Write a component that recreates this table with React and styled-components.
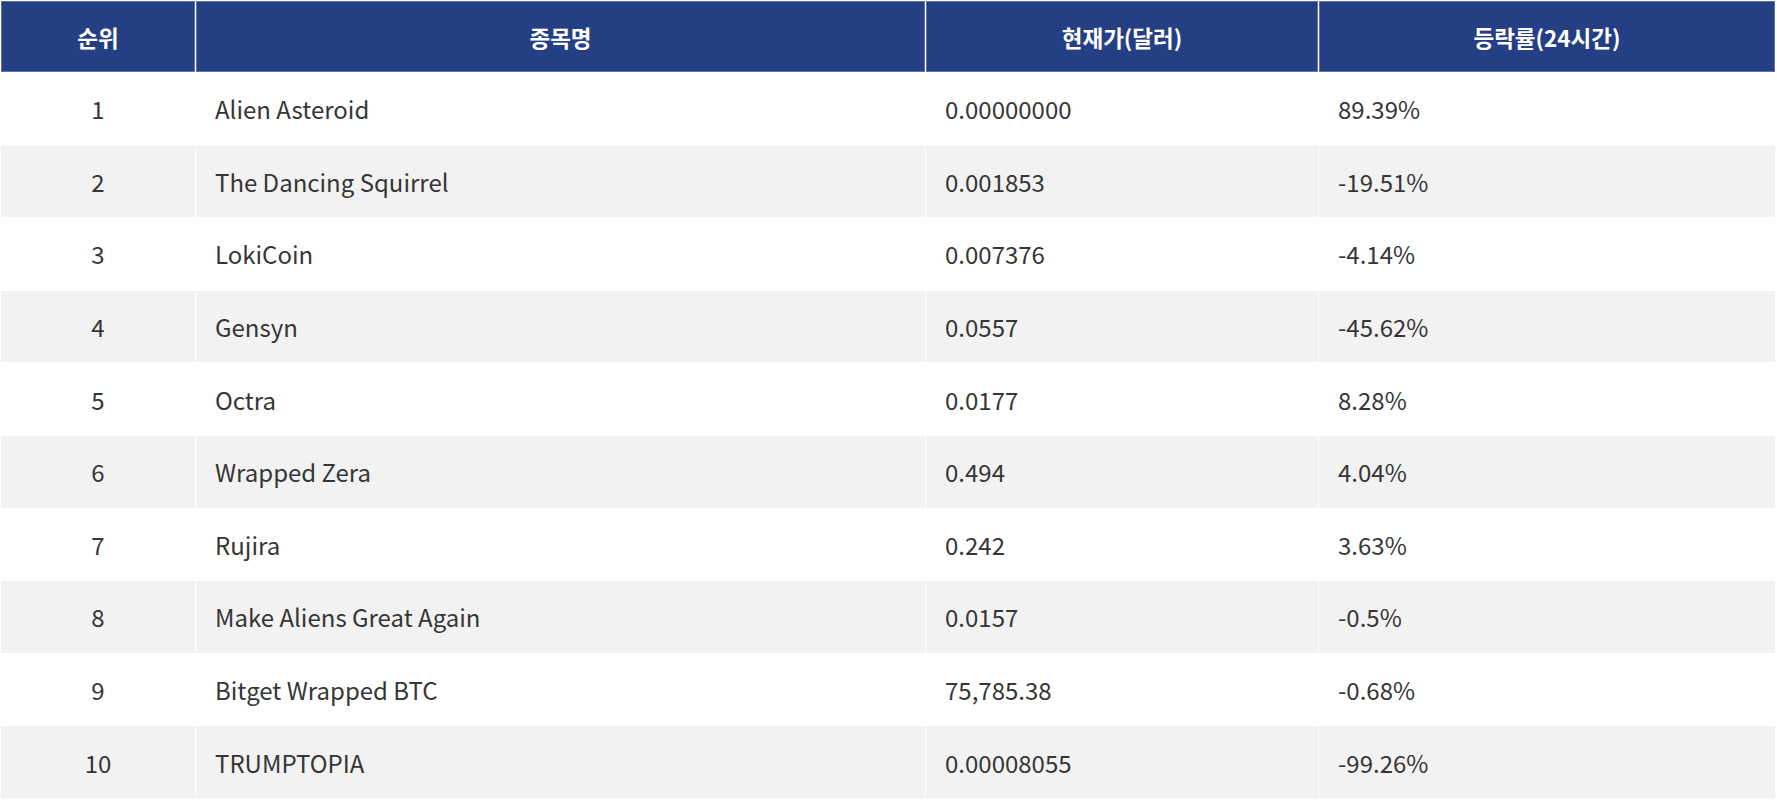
import React from "react";
import styled, { createGlobalStyle } from "styled-components";

const Global = createGlobalStyle`
  html, body { margin: 0; padding: 0; background: #ffffff; }
  body { font-family: "Noto Sans CJK KR", "Noto Sans", sans-serif; }
`;

const Table = styled.table`
  width: 1776px;
  border-collapse: separate;
  border-spacing: 1px;
  table-layout: fixed;
  font-family: "Noto Sans CJK KR", "Noto Sans", sans-serif;
`;

const Col = styled.col`
  width: ${(p) => p.$w}px;
`;

const Th = styled.th`
  height: 71px;
  padding: 0;
  background: #253f85;
  box-shadow: inset 0 0 0 1px #5d71a8;
  color: #ffffff;
  font-size: 22.5px;
  font-weight: 700;
  text-align: center;
  vertical-align: middle;
`;

const Tr = styled.tr`
  background: transparent;
`;

const Td = styled.td`
  height: 71.6px;
  padding: 0 0 0 ${(p) => (p.$center ? 0 : 19)}px;
  background: ${(p) => (p.$alt ? "#f2f2f2" : "#ffffff")};
  color: #363636;
  font-size: 24px;
  font-weight: 400;
  text-align: ${(p) => (p.$center ? "center" : "left")};
  vertical-align: middle;
  white-space: nowrap;
`;

const rows = [
  ["1", "Alien Asteroid", "0.00000000", "89.39%"],
  ["2", "The Dancing Squirrel", "0.001853", "-19.51%"],
  ["3", "LokiCoin", "0.007376", "-4.14%"],
  ["4", "Gensyn", "0.0557", "-45.62%"],
  ["5", "Octra", "0.0177", "8.28%"],
  ["6", "Wrapped Zera", "0.494", "4.04%"],
  ["7", "Rujira", "0.242", "3.63%"],
  ["8", "Make Aliens Great Again", "0.0157", "-0.5%"],
  ["9", "Bitget Wrapped BTC", "75,785.38", "-0.68%"],
  ["10", "TRUMPTOPIA", "0.00008055", "-99.26%"],
];

export default function App() {
  return (
    <>
      <Global />
      <Table>
        <colgroup>
          <Col $w={194} />
          <Col $w={729} />
          <Col $w={392} />
          <Col $w={456} />
        </colgroup>
        <thead>
          <tr>
            <Th>순위</Th>
            <Th>종목명</Th>
            <Th>현재가(달러)</Th>
            <Th>등락률(24시간)</Th>
          </tr>
        </thead>
        <tbody>
          {rows.map((r, i) => {
            const alt = i % 2 === 1;
            return (
              <Tr key={r[0]}>
                <Td $alt={alt} $center>{r[0]}</Td>
                <Td $alt={alt}>{r[1]}</Td>
                <Td $alt={alt}>{r[2]}</Td>
                <Td $alt={alt}>{r[3]}</Td>
              </Tr>
            );
          })}
        </tbody>
      </Table>
    </>
  );
}
